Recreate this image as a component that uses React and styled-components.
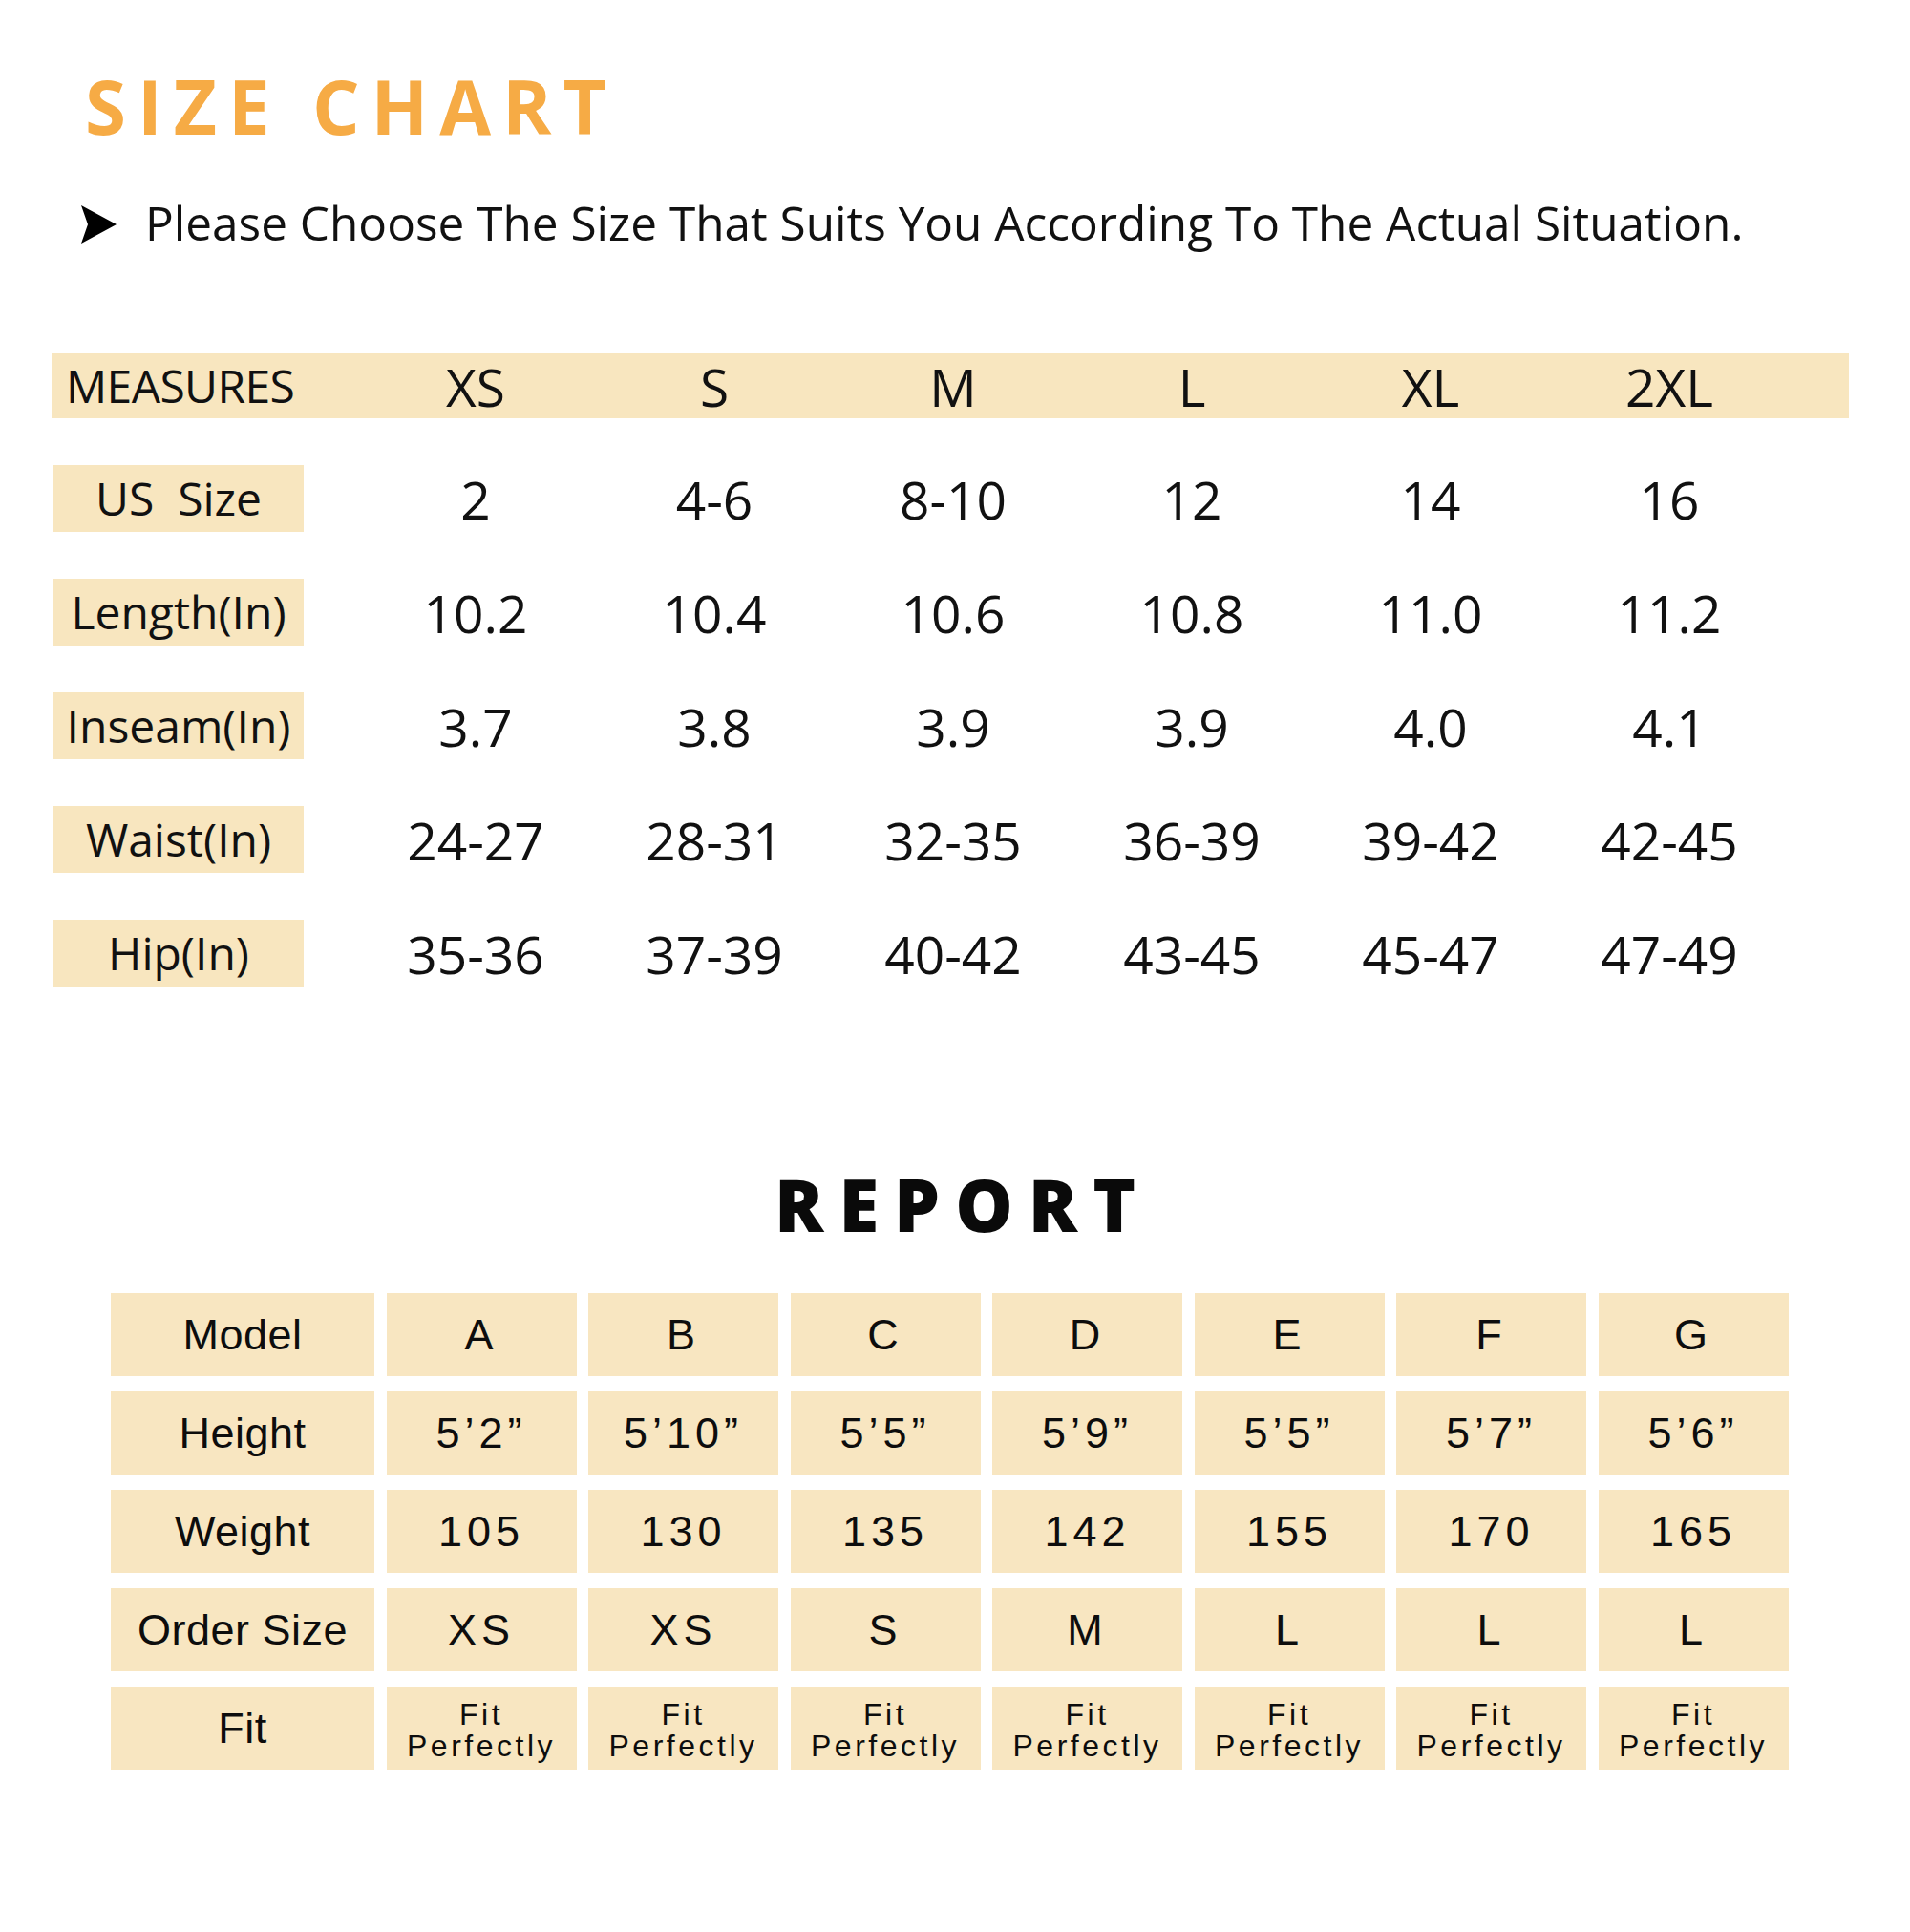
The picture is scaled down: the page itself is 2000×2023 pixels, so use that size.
import React from "react";
import styled, { createGlobalStyle } from "styled-components";

const GlobalStyle = createGlobalStyle`
  html, body {
    margin: 0;
    padding: 0;
    background: #fff;
  }
`;

const Page = styled.div`
  width: 2000px;
  height: 2023px;
  display: flex;
  flex-direction: column;
  background: #fff;
  color: #111;
  font-family: "Open Sans", "Noto Sans", sans-serif;
`;

const Title = styled.h1`
  margin: 72px 0 0 89px;
  font-size: 78px;
  line-height: 78px;
  font-weight: 700;
  letter-spacing: 12px;
  color: #f6ab45;
`;

const Note = styled.div`
  display: flex;
  align-items: center;
  gap: 30px;
  margin: 58px 0 0 85px;
  font-size: 49.5px;
  line-height: 50px;
  color: #111;
`;

const Arrow = styled.svg`
  width: 37px;
  height: 40px;
  flex-shrink: 0;
  margin-top: 4px;
`;

const SizeTable = styled.div`
  margin: 112px 0 0 54px;
  width: 1882px;
  display: flex;
  flex-direction: column;
  gap: 49px;
`;

const SizeRow = styled.div`
  display: grid;
  grid-template-columns: 319px repeat(6, 250px) 1fr;
  align-items: center;
  height: ${(p) => (p.$head ? "68px" : "70px")};
  background: ${(p) => (p.$head ? "#f8e6bf" : "transparent")};
`;

const HeadLabel = styled.div`
  padding-left: 15px;
  font-size: 48px;
  line-height: 1;
  letter-spacing: -0.6px;
`;

const RowLabel = styled.div`
  width: 262px;
  height: 70px;
  margin-left: 2px;
  display: flex;
  align-items: center;
  justify-content: center;
  background: #f8e6bf;
  font-size: 48px;
  line-height: 1;
  white-space: pre;
`;

const SizeCell = styled.div`
  text-align: center;
  font-size: 55px;
  line-height: 1;
`;

const ReportTitle = styled.h2`
  margin: 190px 0 0 0;
  text-align: center;
  font-size: 76px;
  line-height: 76px;
  font-weight: 800;
  letter-spacing: 16px;
  padding-left: 16px;
  color: #0a0a0a;
`;

const ReportGrid = styled.div`
  margin: 55px 0 0 116px;
  display: grid;
  grid-template-columns: 276px repeat(7, 199px);
  grid-auto-rows: 87px;
  column-gap: 12.5px;
  row-gap: 16px;
  font-family: "Liberation Sans", Arial, sans-serif;
`;

const ReportCell = styled.div`
  display: flex;
  flex-direction: column;
  align-items: center;
  justify-content: center;
  background: #f8e6c1;
  font-size: ${(p) => (p.$small ? "32px" : "45px")};
  line-height: ${(p) => (p.$small ? "33px" : "1")};
  letter-spacing: ${(p) => (p.$label ? "0.5px" : p.$small ? "3.5px" : "5px")};
  padding-top: ${(p) => (p.$small ? "4px" : "0")};
  color: #0d0d0d;
`;

const sizes = ["XS", "S", "M", "L", "XL", "2XL"];

const measures = [
  ["US  Size", ["2", "4-6", "8-10", "12", "14", "16"]],
  ["Length(In)", ["10.2", "10.4", "10.6", "10.8", "11.0", "11.2"]],
  ["Inseam(In)", ["3.7", "3.8", "3.9", "3.9", "4.0", "4.1"]],
  ["Waist(In)", ["24-27", "28-31", "32-35", "36-39", "39-42", "42-45"]],
  ["Hip(In)", ["35-36", "37-39", "40-42", "43-45", "45-47", "47-49"]],
];

const report = [
  ["Model", ["A", "B", "C", "D", "E", "F", "G"]],
  ["Height", ["5\u20192\u201d", "5\u201910\u201d", "5\u20195\u201d", "5\u20199\u201d", "5\u20195\u201d", "5\u20197\u201d", "5\u20196\u201d"]],
  ["Weight", ["105", "130", "135", "142", "155", "170", "165"]],
  ["Order Size", ["XS", "XS", "S", "M", "L", "L", "L"]],
];

function App() {
  return (
    <Page>
      <GlobalStyle />
      <Title>SIZE CHART</Title>
      <Note>
        <Arrow viewBox="0 0 37 40">
          <polygon points="0,0 37,20 0,40 7,20" fill="#000" />
        </Arrow>
        Please Choose The Size That Suits You According To The Actual Situation.
      </Note>

      <SizeTable>
        <SizeRow $head>
          <HeadLabel>MEASURES</HeadLabel>
          {sizes.map((s) => (
            <SizeCell key={s}>{s}</SizeCell>
          ))}
        </SizeRow>
        {measures.map(([label, values]) => (
          <SizeRow key={label}>
            <RowLabel>{label}</RowLabel>
            {values.map((v, i) => (
              <SizeCell key={i}>{v}</SizeCell>
            ))}
          </SizeRow>
        ))}
      </SizeTable>

      <ReportTitle>REPORT</ReportTitle>

      <ReportGrid>
        {report.map(([label, values]) => (
          <React.Fragment key={label}>
            <ReportCell $label>{label}</ReportCell>
            {values.map((v, i) => (
              <ReportCell key={i}>{v}</ReportCell>
            ))}
          </React.Fragment>
        ))}
        <ReportCell $label>Fit</ReportCell>
        {Array.from({ length: 7 }).map((_, i) => (
          <ReportCell key={i} $small>
            <span>Fit</span>
            <span>Perfectly</span>
          </ReportCell>
        ))}
      </ReportGrid>
    </Page>
  );
}

export default App;
